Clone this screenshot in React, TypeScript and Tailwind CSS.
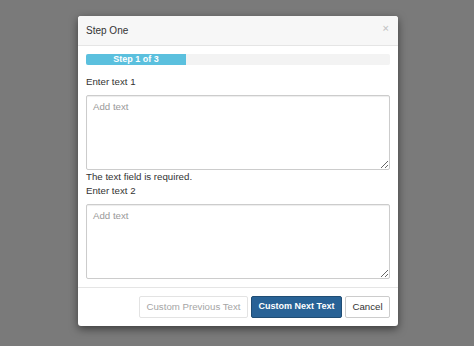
export default function App() {
  return (
    <div
      className="w-[474px] h-[346px] bg-[#7a7a7a] pt-[16px] pl-[78px] overflow-hidden"
      style={{ fontFamily: '"Liberation Sans", Arial, sans-serif' }}
    >
      <div className="w-[320px] h-[310px] bg-white rounded-[3px] shadow-[0_3px_9px_rgba(0,0,0,0.5)] flex flex-col text-[#333] text-[9.7px]">
        {/* Header */}
        <div className="h-[30px] shrink-0 flex items-center justify-between pl-[8px] pr-[9px] bg-[#f7f7f7] border-b border-[#e5e5e5] rounded-t-[3px]">
          <span className="text-[10px]">Step One</span>
          <span className="text-[11px] font-bold text-black/20 -mt-[4px]">×</span>
        </div>

        {/* Body */}
        <div className="px-[8px] pt-[8px] pb-[8px] flex flex-col">
          <div className="h-[11px] bg-[#f3f3f3] rounded-[2px] overflow-hidden">
            <div className="w-[100px] h-full bg-[#5bc0de] flex items-center justify-center text-white font-bold text-[9px] leading-none">
              Step 1 of 3
            </div>
          </div>

          <label className="mt-[10px] leading-[14px]">Enter text 1</label>
          <textarea
            placeholder="Add text"
            className="mt-[6px] h-[75px] w-full border border-[#ccc] rounded-[2px] px-[6px] py-[4px] text-[9.7px] placeholder:text-[#999] outline-none shadow-[inset_0_1px_1px_rgba(0,0,0,0.075)]"
          />
          <div className="leading-[14px]">The text field is required.</div>
          <label className="leading-[14px]">Enter text 2</label>
          <textarea
            placeholder="Add text"
            className="mt-[6px] h-[75px] w-full border border-[#ccc] rounded-[2px] px-[6px] py-[4px] text-[9.7px] placeholder:text-[#999] outline-none shadow-[inset_0_1px_1px_rgba(0,0,0,0.075)]"
          />
        </div>

        {/* Footer */}
        <div className="flex-1 border-t border-[#e5e5e5] flex items-start justify-end gap-[3px] pt-[8px] pr-[8px]">
          <button className="h-[22px] w-[109px] border border-[#e3e3e3] rounded-[2px] bg-white text-[#a5a5a5]">
            Custom Previous Text
          </button>
          <button className="h-[22px] w-[91px] border border-[#204d74] rounded-[2px] bg-[#286296] text-white font-bold text-[9px]">
            Custom Next Text
          </button>
          <button className="h-[22px] w-[45px] border border-[#ccc] rounded-[2px] bg-white text-[#333]">
            Cancel
          </button>
        </div>
      </div>
    </div>
  )
}
